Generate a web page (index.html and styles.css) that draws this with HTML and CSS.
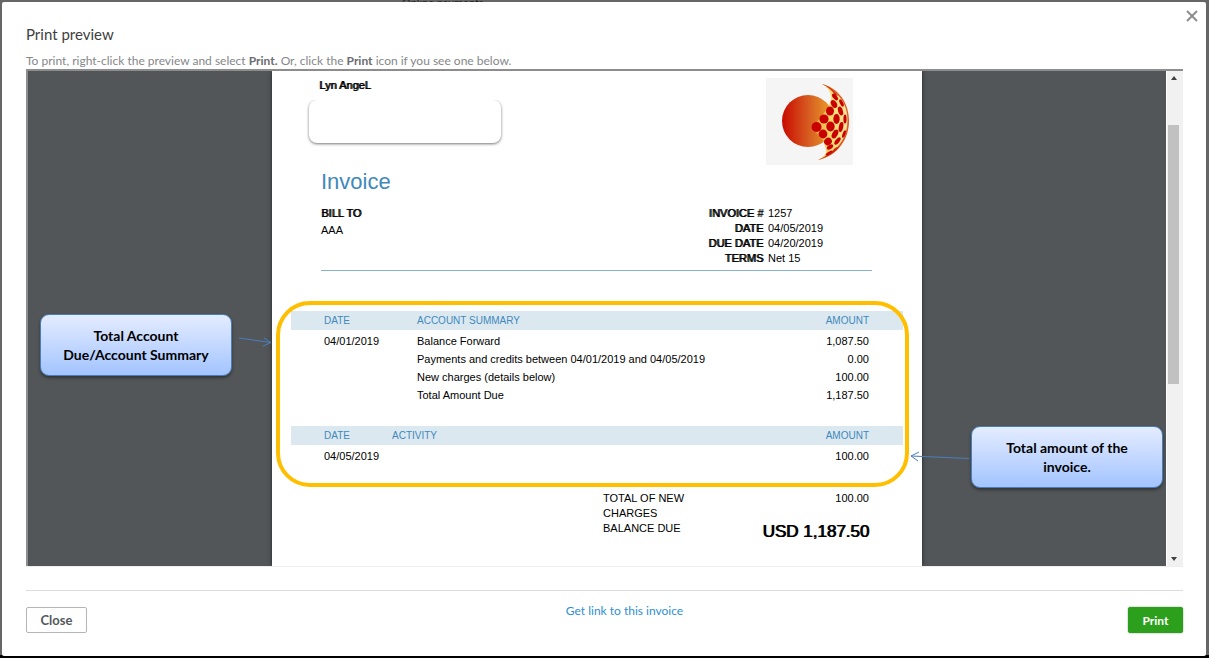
FILE: index.html
```
<!DOCTYPE html>
<html lang="en">
<head>
<meta charset="utf-8">
<title>Print preview</title>
<link rel="stylesheet" href="styles.css">
</head>
<body>
<div class="backdrop" aria-hidden="true"><span class="backdrop-text">Online payments</span></div>
<main class="dialog" role="dialog" aria-labelledby="title">
  <button class="dismiss" type="button" aria-label="Dismiss">
    <svg width="12" height="12" viewBox="0 0 12 12"><path d="M1 1l10 10M11 1L1 11" stroke="#8d8d8d" stroke-width="2" fill="none"/></svg>
  </button>
  <header class="head">
    <h1 id="title">Print preview</h1>
    <p>To print, right-click the preview and select <b>Print.</b> Or, click the <b>Print</b> icon if you see one below.</p>
  </header>

  <section class="viewer">
    <div class="canvas">
      <article class="page">
        <div class="top">
          <div class="company">
            <p class="heavy">Lyn AngeL</p>
            <div class="address"></div>
            <h2>Invoice</h2>
          </div>
          <svg class="logo" width="87" height="87" viewBox="0 0 87 87">
            <defs>
              <linearGradient id="sun"><stop offset="0" stop-color="#c80a00"/><stop offset=".5" stop-color="#d65a20"/><stop offset="1" stop-color="#eda52c"/></linearGradient>
              <linearGradient id="shell"><stop offset="0" stop-color="#e99a2c"/><stop offset=".55" stop-color="#fbdc70"/><stop offset="1" stop-color="#f7e2a0"/></linearGradient>
            </defs>
            <rect width="87" height="87" fill="#f5f5f5"/>
            <circle cx="42" cy="43" r="26" fill="url(#sun)"/>
            <path d="M56 6C74 11 83 26 83 43S73 77 52 82C58 79 61 76 60 71L57 62 46 50 62 30 65 22C66 15 62 9 56 6Z" fill="url(#shell)"/>
            <path d="M56 6C74 11 83 26 83 43S73 77 52 82C71 74 81 61 81.500 43S72 14 56 6Z" fill="#dc5a28"/>
            <path d="M56 6C62 8 68 12 72 18L69 17C66 12 61 8 56 6ZM52 82C62 79 69 75 74 68L69 70C64 76 58 80 52 82Z" fill="#d02a10"/>
            <g fill="#c90000">
              <circle cx="50.500" cy="49" r="5"/>
              <circle cx="58" cy="41" r="4.600"/><circle cx="57" cy="56" r="4.400"/>
              <ellipse cx="64" cy="33" rx="4" ry="4.600"/><ellipse cx="64.500" cy="48.500" rx="4.200" ry="5"/><ellipse cx="62" cy="63.500" rx="4" ry="3.600" transform="rotate(-40 62 63.500)"/>
              <ellipse cx="68" cy="26" rx="2.800" ry="4.200" transform="rotate(-30 68 26)"/><ellipse cx="70.500" cy="41" rx="3.200" ry="5"/><ellipse cx="69" cy="56" rx="2.800" ry="4.800" transform="rotate(28 69 56)"/>
              <ellipse cx="69" cy="19" rx="2" ry="4" transform="rotate(-40 69 19)"/><ellipse cx="74.500" cy="33" rx="2.300" ry="4.600" transform="rotate(-18 74.500 33)"/><ellipse cx="75" cy="49" rx="2.200" ry="5" transform="rotate(12 75 49)"/><ellipse cx="71.500" cy="63" rx="2" ry="4.400" transform="rotate(38 71.500 63)"/>
              <ellipse cx="64" cy="69" rx="3.600" ry="2" transform="rotate(-35 64 69)"/><ellipse cx="63" cy="75" rx="4" ry="1.200" transform="rotate(-35 63 75)"/>
              <ellipse cx="75.500" cy="25" rx="1.600" ry="4" transform="rotate(-26 75.500 25)"/><ellipse cx="79" cy="41" rx="1.600" ry="4.600"/><ellipse cx="78" cy="56" rx="1.400" ry="4" transform="rotate(20 78 56)"/>
            </g>
          </svg>
        </div>

        <div class="info">
          <div class="billto">
            <p class="heavy">BILL TO</p>
            <p>AAA</p>
          </div>
          <dl class="meta">
            <dt class="heavy">INVOICE #</dt><dd>1257</dd>
            <dt class="heavy">DATE</dt><dd>04/05/2019</dd>
            <dt class="heavy">DUE DATE</dt><dd>04/20/2019</dd>
            <dt class="heavy">TERMS</dt><dd>Net 15</dd>
          </dl>
        </div>

        <div class="highlight">
          <table class="summary">
            <thead><tr><th class="date">DATE</th><th>ACCOUNT SUMMARY</th><th class="amount">AMOUNT</th></tr></thead>
            <tbody>
              <tr><td class="date">04/01/2019</td><td>Balance Forward</td><td class="amount">1,087.50</td></tr>
              <tr><td class="date"></td><td>Payments and credits between 04/01/2019 and 04/05/2019</td><td class="amount">0.00</td></tr>
              <tr><td class="date"></td><td>New charges (details below)</td><td class="amount">100.00</td></tr>
              <tr><td class="date"></td><td>Total Amount Due</td><td class="amount">1,187.50</td></tr>
            </tbody>
          </table>
          <table class="activity">
            <thead><tr><th class="date">DATE</th><th>ACTIVITY</th><th class="amount">AMOUNT</th></tr></thead>
            <tbody><tr><td class="date">04/05/2019</td><td></td><td class="amount">100.00</td></tr></tbody>
          </table>
        </div>

        <div class="totals">
          <div class="labels"><p>TOTAL OF NEW CHARGES</p><p>BALANCE DUE</p></div>
          <div class="sums"><p>100.00</p><p class="due">USD 1,187.50</p></div>
        </div>
      </article>
    </div>

    <div class="scrollbar" aria-hidden="true">
      <svg width="6" height="4" viewBox="0 0 6 4"><path d="M0 4L3 0l3 4z" fill="#404040"/></svg>
      <div class="track"><div class="thumb"></div></div>
      <svg width="6" height="4" viewBox="0 0 6 4"><path d="M0 0h6L3 4z" fill="#404040"/></svg>
    </div>

    <aside class="callout callout-left">Total Account<br>Due/Account Summary</aside>
    <svg class="arrow arrow-left" width="34" height="12" viewBox="0 0 34 12"><path d="M1 2l32 4.500M26 2l7 4.500-8 3.500" fill="none" stroke="#4a7ebb"/></svg>
    <aside class="callout callout-right">Total amount of the<br>invoice.</aside>
    <svg class="arrow arrow-right" width="60" height="12" viewBox="0 0 60 12"><path d="M59 7.500L1 5M9 1L1 5l7 5" fill="none" stroke="#4a7ebb"/></svg>
  </section>

  <footer class="foot">
    <button class="btn" type="button">Close</button>
    <a href="#">Get link to this invoice</a>
    <button class="btn primary" type="button">Print</button>
  </footer>
</main>
</body>
</html>
```
FILE: styles.css
```
* { box-sizing: border-box; }

body {
  margin: 0;
  height: 100vh;
  padding: 2px 3px 2px 2px;
  display: flex;
  background: linear-gradient(#666, #666) top / 100% calc(100% - 3px) no-repeat #000;
  font-family: Lato, "Open Sans", sans-serif;
  color: #404040;
  overflow: hidden;
}

h1, h2, p, dl, dd { margin: 0; font-weight: 400; }

.backdrop {
  position: absolute;
  top: 0;
  left: 402px;
  height: 2px;
  overflow: hidden;
}

.backdrop-text {
  display: block;
  margin-top: -4px;
  font-size: 11px;
  line-height: 13px;
  color: #222;
}

.dialog {
  position: relative;
  flex: 1;
  display: flex;
  flex-direction: column;
  padding: 0 23px 0 24px;
  background: #fff;
  border-radius: 2px;
}

.dismiss {
  position: absolute;
  top: 8px;
  right: 8px;
  display: flex;
  padding: 0;
  border: 0;
  background: none;
}

.head { padding-top: 22px; }

.head h1 {
  font-size: 15px;
  line-height: 20px;
}

.head p {
  margin-top: 9px;
  font-size: 12px;
  line-height: 16px;
  color: #85878a;
}

.head b { color: #6b6c72; }

.viewer {
  position: relative;
  flex: 1;
  min-height: 0;
  display: flex;
  border: solid #8d8d8d;
  border-width: 2px 0 0 2px;
  box-shadow: 0 1px #eee;
}

.canvas {
  flex: 1;
  display: flex;
  justify-content: center;
  overflow: hidden;
  background: #525659;
}

.page {
  width: 650px;
  background: #fff;
  box-shadow: 0 0 4px #222;
  font-family: "Liberation Sans", Arial, sans-serif;
  font-size: 11px;
  line-height: 15px;
  color: #000;
}

.heavy { text-shadow: 1px 0 #000; }

.top {
  display: flex;
  justify-content: space-between;
  padding: 7px 69px 0 37px;
}

.company > .heavy { margin-left: 10px; }

.address {
  width: 192px;
  height: 43px;
  margin-top: 7px;
  border-radius: 8px;
  box-shadow: 0 1px 3px #777;
  clip-path: inset(0 -4px -5px);
}

.company h2 {
  margin: 26px 0 0 12px;
  font-size: 22px;
  line-height: 26px;
  color: #4189bb;
}

.info {
  display: flex;
  justify-content: space-between;
  margin: 11px 50px 0 49px;
  padding-bottom: 4px;
  border-bottom: 1px solid #86b3d1;
}

.billto p + p { margin-top: 2px; }

.meta {
  display: grid;
  grid-template-columns: auto 104px;
  column-gap: 5px;
}

.meta dt { text-align: right; }

.highlight {
  position: relative;
  margin: 30px 13px 0 4px;
  padding: 10px 6px 22px 15px;
}

.highlight::after {
  content: "";
  position: absolute;
  inset: 0;
  border: 4px solid #ffbf00;
  border-radius: 34px;
}

table {
  width: 100%;
  table-layout: fixed;
  border-collapse: collapse;
}

th, td {
  height: 18px;
  padding: 0;
  font-weight: 400;
  text-align: left;
}

th {
  height: 19px;
  background: #dbe8f0;
  color: #4189bb;
  font-size: 10px;
}

tbody tr:first-child td { height: 20px; padding-top: 2px; }

.date { width: 126px; padding-left: 33px; }
.amount { width: 100px; padding-right: 34px; text-align: right; }
.activity { margin-top: 22px; }
.activity .date { width: 101px; }

.totals {
  display: flex;
  justify-content: space-between;
  margin: 4px 53px 0 331px;
}

.labels { width: 100px; }
.sums { text-align: right; }

.due {
  margin-top: 14px;
  font-size: 17px;
  line-height: 24px;
  text-shadow: 1px 0 #000;
}

.scrollbar {
  display: flex;
  flex-direction: column;
  align-items: center;
  width: 17px;
  padding: 5px 4px 5px 1px;
  border-left: 1px solid #fff;
  background: #f1f1f1;
}

.track {
  flex: 1;
  width: 11px;
  padding-top: 45px;
}

.thumb {
  height: 60%;
  background: #c1c1c1;
}

.callout {
  position: absolute;
  width: 192px;
  padding: 11px 0;
  border: 1px solid #4a7ebb;
  border-radius: 9px;
  background: linear-gradient(#e4ecff, #a3c4ff);
  box-shadow: 0 2px 3px #333;
  font-size: 14px;
  font-weight: 700;
  line-height: 19px;
  text-align: center;
  color: #000;
}

.callout-left { top: 243px; left: 12px; }
.callout-right { top: 355px; right: 20px; }

.arrow { position: absolute; }
.arrow-left { top: 265px; left: 210px; }
.arrow-right { top: 380px; right: 213px; }

.foot {
  display: grid;
  grid-template-columns: 1fr auto 1fr;
  margin-top: 24px;
  padding: 16px 0 23px;
  border-top: 1px solid #ddd;
  font-size: 12px;
}

.foot a {
  margin: -4px 0 0 40px;
  line-height: 15px;
  color: #2f8fd0;
  text-decoration: none;
}

.btn {
  justify-self: start;
  width: 61px;
  height: 26px;
  padding: 0;
  border: 1px solid #b4b5ba;
  border-radius: 2px;
  background: #fff;
  font: 700 13px Lato, sans-serif;
  color: #55585c;
}

.primary {
  justify-self: end;
  width: 55px;
  border-color: #2ca01c;
  background: #2ca01c;
  box-shadow: 0 0 2px #999;
  font-size: 12px;
  color: #fff;
}
```
